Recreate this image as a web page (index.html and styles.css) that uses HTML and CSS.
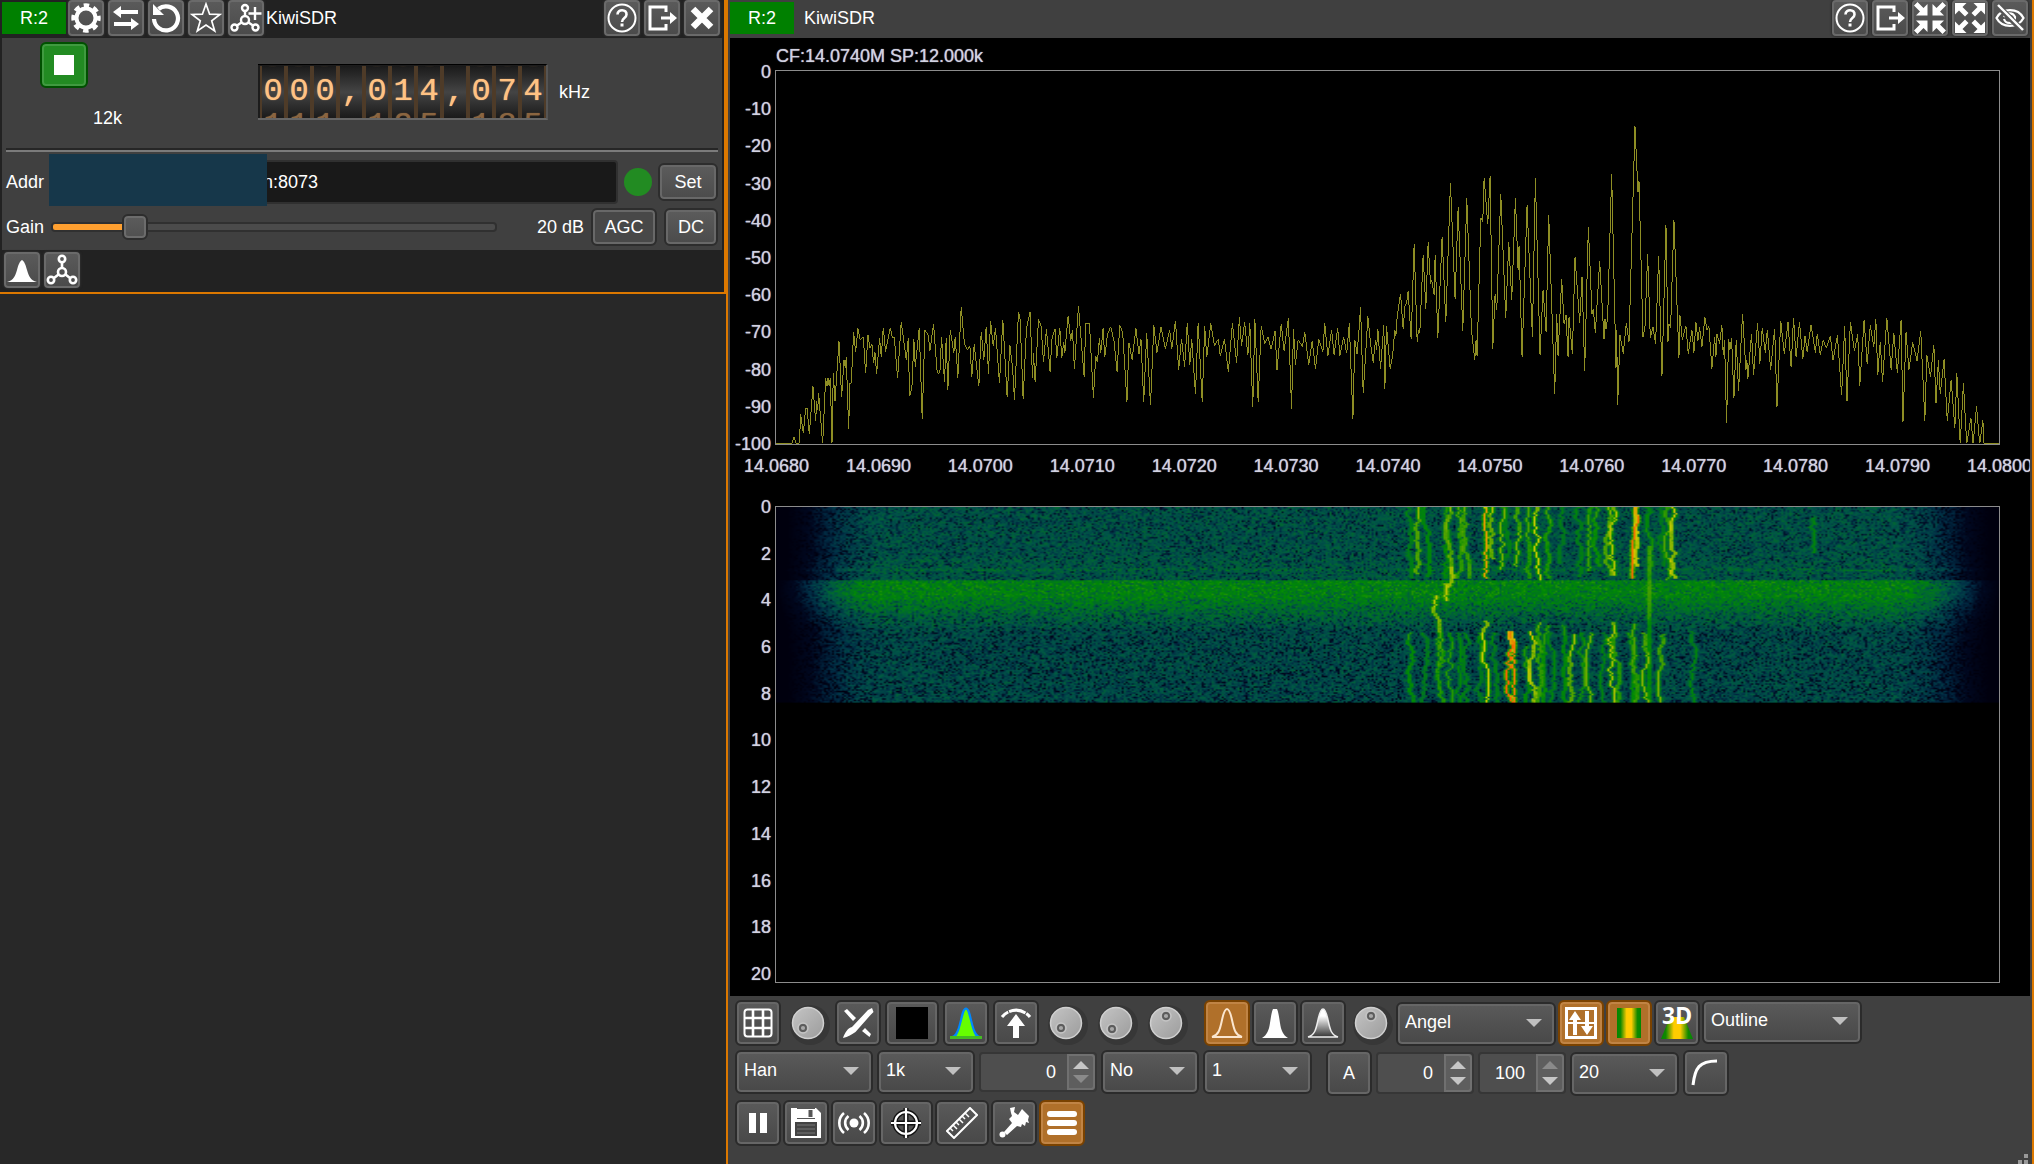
FILE: index.html
```html
<!DOCTYPE html>
<html lang="en">
<head>
<meta charset="utf-8">
<title>KiwiSDR</title>
<link rel="stylesheet" href="styles.css">
</head>
<body>
<svg class="defs" aria-hidden="true">
  <defs>
    <linearGradient id="fade" x1="0" y1="0" x2="0" y2="1"><stop offset="0" stop-color="#fff"/><stop offset=".25" stop-color="#fff"/><stop offset="1" stop-color="#333"/></linearGradient>
    <linearGradient id="band"><stop offset="0" stop-color="#080"/><stop offset=".15" stop-color="#180"/><stop offset=".4" stop-color="#fc0"/><stop offset=".6" stop-color="#fc0"/><stop offset=".85" stop-color="#180"/><stop offset="1" stop-color="#080"/></linearGradient>
    <linearGradient id="knob" x1="0" y1="0" x2="1" y2="1"><stop offset="0" stop-color="#c4c4c4"/><stop offset="1" stop-color="#9c9c9c"/></linearGradient>
    <symbol id="i-help" viewBox="0 0 32 32"><circle cx="16" cy="16" r="13.5" fill="none" stroke="#fff" stroke-width="2"/><path d="M11.5 12.5c0-6 9.500-5.500 9 0c0 3.500-4.500 3.500-4.500 7.500" fill="none" stroke="#fff" stroke-width="2.600"/><rect x="14.500" y="21.500" width="3" height="3" fill="#fff"/></symbol>
    <symbol id="i-exit" viewBox="0 0 32 32"><path d="M20 10V5H4v22h16v-5" fill="none" stroke="#fff" stroke-width="3"/><path d="M15 14.500h9V10l7 6-7 6v-4.500h-9z" fill="#fff"/></symbol>
    <symbol id="i-bell" viewBox="0 0 32 32"><path d="M1 30c7-2 8-8 10-17c1.500-7 3-11 5-11s3.500 4 5 11c2 9 3 15 10 17z"/></symbol>
    <symbol id="i-nodes" viewBox="0 0 32 32"><g fill="none" stroke="#fff" stroke-width="2.600"><circle cx="16" cy="5" r="3.200"/><circle cx="16" cy="18" r="4"/><circle cx="5" cy="26" r="3.200"/><circle cx="27" cy="26" r="3.200"/><path d="M16 8v6M12.500 20.500L8 24M19.500 20.500L24 24"/></g></symbol>
    <symbol id="i-dial" viewBox="0 0 46 46"><circle cx="25" cy="25" r="20" fill="#373737"/><circle cx="23" cy="23" r="15.500" fill="url(#knob)" stroke="#cfcfcf" stroke-width="1.500"/></symbol>
    <symbol id="i-dot" viewBox="0 0 12 12"><circle cx="6" cy="6" r="5" fill="#909090" stroke="#c4c4c4" stroke-width="1.500"/><circle cx="6" cy="6" r="3" fill="#a8a8a8" stroke="#5c5c5c" stroke-width="1.800"/></symbol>
  </defs>
</svg>

<main class="workspace">
  <section class="side">
    <div class="device">
      <header class="bar">
        <span class="badge">R:2</span>
        <button class="tool" aria-label="Settings"><svg viewBox="0 0 32 32"><circle cx="16" cy="16" r="9.500" fill="none" stroke="#fff" stroke-width="4"/><circle cx="16" cy="16" r="12.700" fill="none" stroke="#fff" stroke-width="4" stroke-dasharray="5.500 4.475" stroke-dashoffset="2.700"/></svg></button>
        <button class="tool" aria-label="Swap"><svg viewBox="0 0 32 32" fill="#fff"><path d="M3 10l8-6v4h17v4H11v4zM29 22l-8 6v-4H4v-4h17v-4z"/></svg></button>
        <button class="tool" aria-label="Reload"><svg viewBox="0 0 32 32"><path d="M8.500 7A12 12 0 1 1 4 17" fill="none" stroke="#fff" stroke-width="4.200"/><path d="M3 2v11h11z" fill="#fff"/></svg></button>
        <button class="tool" aria-label="Favourite"><svg viewBox="0 0 32 32"><path d="M16 2l3.600 10.200L30 12.500l-8.300 6.300L24.700 29 16 23 7.300 29l3-10.200L2 12.500l10.400-.3z" fill="none" stroke="#fff" stroke-width="1.700"/></svg></button>
        <button class="tool" aria-label="Add channel"><svg viewBox="0 0 32 32"><g fill="none" stroke="#fff" stroke-width="2.400"><circle cx="15" cy="6" r="3"/><circle cx="15" cy="18" r="4"/><circle cx="4.500" cy="25.500" r="3"/><circle cx="25.500" cy="25.500" r="3"/><path d="M15 9v5M11.500 20.500L7 23.500M18.500 20.500L23 23.500M25 5v13M18.500 11.500h13"/></g></svg></button>
        <h1 class="name">KiwiSDR</h1>
        <span class="grow"></span>
        <button class="tool" aria-label="Help"><svg><use href="#i-help"/></svg></button>
        <button class="tool" aria-label="Move"><svg><use href="#i-exit"/></svg></button>
        <button class="tool" aria-label="Close"><svg viewBox="0 0 32 32"><path d="M7 7l18 18M25 7L7 25" stroke="#fff" stroke-width="6.500"/></svg></button>
      </header>

      <div class="panel">
        <div class="tuning">
          <div class="run">
            <button class="start" aria-label="Stop"><span class="stop"></span></button>
            <span class="rate">12k</span>
          </div>
          <div class="freq" id="freq" aria-label="Frequency"></div>
          <span class="unit">kHz</span>
        </div>
        <hr class="rule">
        <div class="line addr">
          <label for="addr">Addr</label>
          <span class="field"><input id="addr" type="text" value="n:8073"><span class="mask"></span></span>
          <span class="led"></span>
          <button class="push set">Set</button>
        </div>
        <div class="line gain">
          <label for="gain">Gain</label>
          <input id="gain" class="slider" type="range" min="0" max="120" value="20">
          <output class="db" for="gain">20 dB</output>
          <button class="push agc">AGC</button>
          <button class="push dc">DC</button>
        </div>
      </div>

      <footer class="bar foot">
        <button class="tool" aria-label="Spectrum"><svg viewBox="0 0 32 32"><path d="M1 28c7-2 8-6 10-12c1.500-6 3-9 5-10c2 1 3.500 4 5 10c2 6 3 10 10 12z" fill="#fff"/></svg></button>
        <button class="tool" aria-label="Channels"><svg><use href="#i-nodes"/></svg></button>
      </footer>
    </div>
  </section>

  <section class="view">
    <header class="bar light">
      <span class="badge">R:2</span>
      <h2 class="name">KiwiSDR</h2>
      <span class="grow"></span>
      <button class="tool" aria-label="Help"><svg><use href="#i-help"/></svg></button>
      <button class="tool" aria-label="Move"><svg><use href="#i-exit"/></svg></button>
      <button class="tool" aria-label="Shrink"><svg viewBox="0 0 32 32" fill="#fff"><path id="in" d="M13.500 13.500H2l4-4L0 3.500 3.500 0l6 6 4-4z"/><use href="#in" transform="matrix(-1 0 0 1 32 0)"/><use href="#in" transform="matrix(1 0 0 -1 0 32)"/><use href="#in" transform="matrix(-1 0 0 -1 32 32)"/></svg></button>
      <button class="tool" aria-label="Enlarge"><svg viewBox="0 0 32 32" fill="#fff"><path id="out" d="M1 1h11.500l-4 4 6 6-3.500 3.500-6-6-4 4z"/><use href="#out" transform="matrix(-1 0 0 1 32 0)"/><use href="#out" transform="matrix(1 0 0 -1 0 32)"/><use href="#out" transform="matrix(-1 0 0 -1 32 32)"/></svg></button>
      <button class="tool" aria-label="Hide"><svg viewBox="0 0 32 32" fill="none" stroke="#fff" stroke-width="2.200"><path d="M2.500 16C8 5.500 24 5.500 29.500 16C24 26.500 8 26.500 2.500 16z"/><path d="M10 15a6 6 0 0 1 11 0c1 7-9 8-11 2"/><path d="M4 4l25 25" stroke="#555" stroke-width="6"/><path d="M4 3l25 25" stroke-width="2.400"/></svg></button>
    </header>

    <div class="plots">
      <p class="caption">CF:14.0740M SP:12.000k</p>
      <div class="yaxis power"><span>0</span><span>-10</span><span>-20</span><span>-30</span><span>-40</span><span>-50</span><span>-60</span><span>-70</span><span>-80</span><span>-90</span><span>-100</span></div>
      <div class="frame"><canvas id="spectrum"></canvas></div>
      <div class="xaxis"><span>14.0680</span><span>14.0690</span><span>14.0700</span><span>14.0710</span><span>14.0720</span><span>14.0730</span><span>14.0740</span><span>14.0750</span><span>14.0760</span><span>14.0770</span><span>14.0780</span><span>14.0790</span><span>14.0800</span></div>
      <div class="yaxis time"><span>0</span><span>2</span><span>4</span><span>6</span><span>8</span><span>10</span><span>12</span><span>14</span><span>16</span><span>18</span><span>20</span></div>
      <div class="frame"><canvas id="waterfall"></canvas></div>
    </div>

    <div class="controls">
      <div class="row traces">
        <div class="group wide">
          <button class="btn" aria-label="Grid"><svg viewBox="0 0 32 32" fill="none" stroke="#fff" stroke-width="2"><rect x="2.500" y="2.500" width="27" height="27" rx="3"/><path d="M11 3v26M21 3v26M3 11h26M3 21h26" stroke-width="2.600"/></svg></button>
          <label class="dial"><input type="range" aria-label="Grid intensity"><svg class="knob"><use href="#i-dial"/><use href="#i-dot" x="12" y="22" width="12" height="12"/></svg></label>
          <button class="btn" aria-label="Clear"><svg viewBox="0 0 32 32" fill="#fff"><path d="M1 31c2-6 5-10 9-11L26 3l4-2 1.500 4-3 3-15 17C10 27 6 30 1 31z"/><path d="M2 4l3-2 9 9-3 3zM20 24l3-3 6 6-1.500 3z"/></svg></button>
          <button class="btn color" aria-label="Trace colour"><span class="swatch"></span></button>
          <button class="btn" aria-label="Max hold"><svg viewBox="0 0 32 32"><path d="M2 29C8 28 10 10 12 5c2-6 6-6 8 0c2 5 4 23 10 24z" fill="#08f"/><path d="M5 31C11 25 13 4 16 2.500C19 4 21 25 27 31z" fill="#6f0"/><path d="M0 29h32v3H0z" fill="#4b2"/></svg></button>
          <button class="btn" aria-label="Reference level"><svg viewBox="0 0 32 32"><path d="M2 10C9 1 23 1 30 10" fill="none" stroke="#fff" stroke-width="3" stroke-dasharray="8 1 17 1"/><path d="M16 7l9 12h-6v12h-6V19H7z" fill="#fff"/></svg></button>
          <label class="dial"><input type="range" aria-label="Decay"><svg class="knob"><use href="#i-dial"/><use href="#i-dot" x="12" y="22" width="12" height="12"/></svg></label>
          <label class="dial"><input type="range" aria-label="Decay divisor"><svg class="knob"><use href="#i-dial"/><use href="#i-dot" x="13" y="23" width="12" height="12"/></svg></label>
          <label class="dial"><input type="range" aria-label="Stroke"><svg class="knob"><use href="#i-dial"/><use href="#i-dot" x="17" y="10" width="12" height="12"/></svg></label>
        </div>
        <div class="group">
          <button class="btn on" aria-pressed="true" aria-label="Line trace"><svg viewBox="0 0 32 32"><use href="#i-bell" fill="none" stroke="#fbe6cf" stroke-width="2"/></svg></button>
          <button class="btn" aria-label="Filled trace"><svg viewBox="0 0 32 32"><path d="M3 31c5-3 7-8 8-15c1-6 1.500-11 3-14h4c1.500 3 2 8 3 14c1 7 3 12 8 15z" fill="#fff"/></svg></button>
          <button class="btn" aria-label="Gradient trace"><svg viewBox="0 0 32 32"><use href="#i-bell" fill="url(#fade)" stroke="#eee" stroke-width="1.500"/></svg></button>
          <label class="dial"><input type="range" aria-label="Trace intensity"><svg class="knob"><use href="#i-dial"/><use href="#i-dot" x="17" y="10" width="12" height="12"/></svg></label>
          <span class="combo map low"><select aria-label="Colour map"><option>Angel</option></select></span>
          <button class="btn on" aria-pressed="true" aria-label="Invert waterfall"><svg viewBox="0 0 32 32"><rect x="1.500" y="1.500" width="29" height="29" fill="none" stroke="#fff" stroke-width="3"/><path d="M2 16h28" stroke="#fff" stroke-width="2"/><path d="M8 28V13H4l6-9 6 9h-4v15zM20 4v15h-4l6 9 6-9h-4V4z" fill="#fff"/></svg></button>
          <button class="btn on" aria-pressed="true" aria-label="Waterfall"><svg viewBox="0 0 32 32"><path d="M4 1h24v30H4z" fill="url(#band)"/></svg></button>
          <button class="btn" aria-label="3D spectrogram"><svg viewBox="0 0 32 32"><path d="M9 10h14l9 22H0z" fill="url(#band)"/><text x="16" y="17" class="three">3D</text></svg></button>
          <span class="combo map"><select aria-label="3D style"><option>Outline</option></select></span>
        </div>
      </div>

      <div class="row">
        <div class="group wide">
          <span class="combo window"><select aria-label="FFT window"><option>Han</option></select></span>
          <span class="combo narrow"><select aria-label="FFT size"><option>1k</option></select></span>
          <span class="spin overlap"><input type="text" value="0" aria-label="Overlap"><span class="steps"><button aria-label="Up" class="up"></button><button aria-label="Down" class="down" disabled></button></span></span>
          <span class="combo narrow"><select aria-label="Averaging"><option>No</option></select></span>
          <span class="combo mid"><select aria-label="Averages"><option>1</option></select></span>
        </div>
        <div class="group wide">
          <button class="btn">A</button>
          <span class="spin ref"><input type="text" value="0" aria-label="Reference"><span class="steps"><button aria-label="Up" class="up"></button><button aria-label="Down" class="down"></button></span></span>
          <span class="spin range"><input type="text" value="100" aria-label="Range"><span class="steps"><button aria-label="Up" class="up" disabled></button><button aria-label="Down" class="down"></button></span></span>
          <span class="combo mid low"><select aria-label="Frames per second"><option>20</option></select></span>
          <button class="btn" aria-label="Linear scale"><svg viewBox="0 0 32 32"><path d="M3 28C5 11 9 4 27 4" fill="none" stroke="#fff" stroke-width="3"/></svg></button>
        </div>
      </div>

      <div class="row">
        <div class="group">
          <button class="btn" aria-label="Pause"><svg viewBox="0 0 32 32" fill="#fff"><path d="M7 6h7v20H7zM18 6h7v20h-7z"/></svg></button>
          <button class="btn" aria-label="Save"><svg viewBox="0 0 32 32"><path d="M1 1h25l5 5v25H1z" fill="#fff"/><path d="M7 1h18v11H7z" fill="#555"/><path d="M7 2h18v9H7z" fill="#fff"/><path d="M18.500 3h4v7h-4z" fill="#555"/><path d="M5 15h22v14H5z" fill="#444"/><path d="M7 18h18M7 22h18M7 26h18" stroke="#777"/></svg></button>
          <button class="btn" aria-label="Broadcast"><svg viewBox="0 0 32 32" fill="none" stroke="#fff" stroke-width="2.600"><circle cx="16" cy="16" r="4.500" fill="#fff" stroke="none"/><path d="M10.500 9a9 9 0 0 0 0 14M21.500 9a9 9 0 0 1 0 14M6 6a13 13 0 0 0 0 20M26 6a13 13 0 0 1 0 20"/></svg></button>
          <button class="btn color" aria-label="Go to annotation"><svg viewBox="0 0 32 32" fill="none" stroke="#fff" stroke-width="2.200"><g stroke="#111" stroke-width="5"><circle cx="16" cy="16" r="11"/><path d="M16 1v30M1 16h30"/></g><circle cx="16" cy="16" r="11"/><path d="M16 1v30M1 16h30"/></svg></button>
          <button class="btn color" aria-label="Markers"><svg viewBox="0 0 32 32" fill="none" stroke="#fff" stroke-width="2"><path d="M1 24L24 1l7 7L8 31z"/><path d="M4 21l3 3M7 18l4 4M10 15l3 3M13 12l4 4M16 9l3 3M19 6l4 4" stroke-width="1.500"/></svg></button>
          <button class="btn" aria-label="Measurements"><svg viewBox="0 0 32 32" fill="#fff"><path d="M12 1l5-1-1 5 4 3 4-6 7 7-1 4 1 3-3-1-1 4-3-2-1 3-4-1-10 9-3-3 8-9-3-4 3-3-1-3z"/><circle cx="4.500" cy="27.500" r="3"/></svg></button>
          <button class="btn on" aria-pressed="true" aria-label="Controls"><svg viewBox="0 0 32 32" fill="#fff"><rect x="1" y="4" width="30" height="6" rx="3"/><rect x="1" y="13" width="30" height="6" rx="3"/><rect x="1" y="22" width="30" height="6" rx="3"/></svg></button>
        </div>
      </div>
      <span class="grip"></span>
    </div>
  </section>
</main>
<script src="plots.js"></script>
</body>
</html>
```
FILE: styles.css
```css
* { box-sizing: border-box; }
body {
  margin: 0;
  background: #282828;
  color: #fff;
  font: 18px/20px "Liberation Sans", Arial, sans-serif;
}
button, input, select { font: inherit; color: inherit; margin: 0; }
.defs { position: absolute; width: 0; height: 0; }
.workspace {
  display: grid;
  grid-template-columns: 726fr 1308fr;
  min-height: 100vh;
}
.grow { flex: 1; }

/* window bars */
.device {
  border-right: 2px solid #dc7800;
  border-bottom: 2px solid #dc7800;
  background: #222;
  padding: 0 2px;
}
.bar {
  display: flex;
  gap: 4px;
  height: 38px;
  padding-right: 2px;
}
.bar.light { background: #404040; }
.badge {
  width: 64px;
  height: 32px;
  margin: 2px -2px 0 0;
  background: #008000;
  line-height: 32px;
  text-align: center;
}
.name { margin: 0 0 0 -2px; font: inherit; line-height: 36px; }
.light .name { margin-left: 8px; }
.tool {
  width: 36px;
  height: 36px;
  padding: 0;
  border: 2px solid #6a6a6a;
  border-radius: 4px;
  background: linear-gradient(#5a5a5a, #4b4b4b);
  box-shadow: 0 0 2px 1px #2d2d2d;
}
.tool svg { display: block; width: 32px; height: 32px; }
.foot { height: 42px; padding: 2px; }

/* device panel */
.panel { background: #404040; height: 212px; padding: 4px 4px 0; }
.tuning { display: flex; height: 106px; }
.run { width: 252px; padding-left: 34px; }
.start {
  display: grid;
  place-items: center;
  width: 48px;
  height: 46px;
  padding: 0;
  border: 2px solid #005000;
  border-radius: 6px;
  background: #228b22;
  box-shadow: inset 0 0 0 2px #409a40;
}
.stop { width: 20px; height: 20px; background: #fff; }
.rate { display: block; margin: 20px 0 0 53px; }
.freq {
  display: flex;
  height: 56px;
  margin-top: 22px;
  padding: 1px 0 0 2px;
  border-top: 1px solid #000;
  border-right: 2px solid #555;
  border-bottom: 2px solid #666;
  background: #1c1c1c;
}
.digit {
  display: flex;
  flex-direction: column;
  justify-content: center;
  width: 26px;
  height: 52px;
  overflow: hidden;
  border: solid #4e3b28;
  border-width: 0 2px;
  background: linear-gradient(#1a1a1a, #444 50%, #1a1a1a);
  color: #ffc283;
  font: 32px/34px "Liberation Mono", monospace;
  text-align: center;
  text-shadow: 0 0 1px currentColor;
}
.digit span { flex: none; height: 34px; }
.ghost { color: #8a6540; }
.unit { margin: 40px 0 0 11px; }
.rule { height: 4px; margin: 0 0 6px; border: solid; border-width: 2px 0; border-color: #262626 transparent #7b7b7b; background: #7b7b7b; }
.line { display: flex; align-items: center; }
.addr { height: 48px; }
.line label { width: 45px; }
.field { position: relative; flex: 1; }
.field input {
  display: block;
  width: 100%;
  height: 44px;
  padding: 0 8px 0 210px;
  border: 2px solid #303030;
  border-radius: 4px;
  background: #191919;
}
.mask { position: absolute; left: -2px; top: -6px; width: 218px; height: 52px; background: #16374a; }
.led { width: 28px; height: 28px; margin: 0 6px; border-radius: 50%; background: #228b22; }
.push {
  height: 38px;
  padding: 0;
  border: 2px solid #2d2d2d;
  border-radius: 6px;
  background: linear-gradient(#5c5c5c, #4b4b4b);
  box-shadow: inset 0 0 0 2px #686868;
}
.set { width: 60px; }
.gain { height: 42px; }
.slider {
  appearance: none;
  flex: none;
  width: 446px;
  height: 10px;
  border: 2px solid #303030;
  border-radius: 4px;
  background: linear-gradient(90deg, #ffa030 72px, #4b4b4b 72px);
}
.slider::-webkit-slider-thumb {
  appearance: none;
  width: 26px;
  height: 26px;
  border: 2px solid #2d2d2d;
  border-radius: 6px;
  background: linear-gradient(#5c5c5c, #505050);
  box-shadow: inset 0 0 0 2px #6c6c6c;
}
.db { flex: 1; text-align: right; }
.agc { width: 66px; margin: 0 7px; background: #484848; }
.dc { width: 54px; }

/* plots */
.view {
  display: flex;
  flex-direction: column;
  min-width: 0;
  padding: 0 2px;
  border: solid #dc7800;
  border-width: 0 2px;
  background: #404040;
}
.plots {
  flex: 1;
  display: grid;
  grid-template-columns: 45px minmax(0, 1fr);
  grid-template-rows: 32px 375fr 61px 477fr;
  padding: 0 30px 13px 0;
  background: #000;
  overflow: hidden;
  color: #d2d2e2;
  text-shadow: 0 0 1px #c8c8d8;
  line-height: 18px;
}
.caption { grid-column: 2; margin: 9px 0 0 1px; }
.yaxis {
  display: flex;
  flex-direction: column;
  justify-content: space-between;
  padding-right: 4px;
  text-align: right;
}
.power { margin: -7px 0 -8px; }
.time { margin: -8px 0 0; }
.frame { position: relative; border: 1px solid #8c8c8c; }
.frame canvas { position: absolute; left: 0; top: 0; width: 100%; height: 100%; }
.xaxis {
  grid-column: 2;
  display: flex;
  justify-content: space-between;
  margin: 12px -32px 0 -31px;
}

/* controls */
.controls {
  position: relative;
  display: flex;
  flex-direction: column;
  gap: 4px;
  height: 168px;
  padding: 4px 4px 0 5px;
}
.row { display: flex; gap: 14px; }
.traces { gap: 15px; }
.group { display: flex; gap: 2px; }
.wide { gap: 4px; }
.btn {
  display: grid;
  place-items: center;
  width: 46px;
  height: 46px;
  padding: 0;
  border: 2px solid #2b2b2b;
  border-radius: 6px;
  background: linear-gradient(#5a5a5a, #484848);
  box-shadow: inset 0 0 0 2px #666;
}
.btn svg { width: 32px; height: 32px; }
.btn.color { width: 54px; }
.btn.on { border-color: #7a4200; background: #b0702a; box-shadow: inset 0 0 0 2px #c08445; }
.swatch { width: 32px; height: 32px; background: #000; }
.three { fill: #fff; font: bold 23px "Noto Sans", sans-serif; text-anchor: middle; }
.dial { position: relative; width: 46px; height: 46px; }
.dial input { position: absolute; inset: 0; width: 100%; height: 100%; opacity: 0; }
.knob { display: block; width: 46px; height: 46px; }
.combo { position: relative; height: 44px; }
.combo.low { margin-top: 2px; }
.combo::after {
  content: "";
  position: absolute;
  right: 14px;
  top: 17px;
  border: solid transparent;
  border-width: 8px 8px 0;
  border-top-color: #c0c0c0;
  pointer-events: none;
}
.combo select {
  appearance: none;
  width: 100%;
  height: 100%;
  padding: 0 10px 4px 7px;
  border: 2px solid #2b2b2b;
  border-radius: 6px;
  background: linear-gradient(#5a5a5a, #484848);
  box-shadow: inset 0 0 0 2px #666;
}
.map { width: 160px; }
.window { width: 138px; }
.narrow { width: 98px; }
.mid { width: 109px; }
.spin {
  display: flex;
  height: 42px;
  margin-top: 2px;
  border: 2px solid #363636;
  border-radius: 4px;
  background: #4e4e4e;
}
.spin input { flex: 1; min-width: 0; padding: 0 11px 0 0; border: 0; background: none; text-align: right; }
.overlap { width: 118px; height: 40px; }
.ref { width: 98px; }
.range { width: 88px; }
.steps {
  display: flex;
  flex-direction: column;
  justify-content: space-evenly;
  align-items: center;
  width: 28px;
  border-radius: 0 4px 4px 0;
  background: #5e5e5e;
  box-shadow: inset 0 0 0 2px #707070;
}
.steps button { padding: 0; border: solid transparent; background: none; width: 16px; height: 8px; }
.steps .up { border-width: 0 8px 8px; border-bottom-color: #c6c6c6; }
.steps .down { border-width: 8px 8px 0; border-top-color: #c6c6c6; }
.steps .up:disabled { border-bottom-color: #8a8a8a; }
.steps .down:disabled { border-top-color: #8a8a8a; }
.grip {
  position: absolute;
  right: 2px;
  bottom: 0;
  width: 10px;
  height: 10px;
  background:
    linear-gradient(#999, #999) 6px 0 / 4px 4px no-repeat,
    linear-gradient(#999, #999) 6px 6px / 4px 4px no-repeat,
    linear-gradient(#999, #999) 0 6px / 4px 4px no-repeat;
}
```
FILE: plots.js
```js
// Frequency wheels: each digit with its neighbours above and below.
const freq = document.getElementById('freq');
for (const c of '000,014,074') {
  const cell = document.createElement('div');
  cell.className = 'digit';
  const isDigit = c !== ',';
  const parts = [isDigit ? (+c + 9) % 10 : '', c, isDigit ? (+c + 1) % 10 : ''];
  parts.forEach((p, i) => {
    const s = document.createElement('span');
    s.textContent = p;
    if (i !== 1) s.className = 'ghost';
    cell.append(s);
  });
  freq.append(cell);
}

let seed = 7;
function rnd() {
  seed = (seed * 1664525 + 1013904223) % 4294967296;
  return seed / 4294967296;
}

// Trace vertices in thirds of a pixel on a 1224 x 374 plot.
const lower = `168,1333 213,1333 219,1312 226,1333 235,1333 239,1243 247,1300 254,1225 258,1225 265,1303 276,1160 284,1265 287,1205 290,1230 293,1180 305,1333 314,1135 318,1160 321,1135 325,1160 328,1133 333,1333 337,1120 342,1205 354,1024 362,1193 369,1080 373,1105 376,1072 383,1288 387,1150 391,1150 398,997 404,1055 411,985 418,1020 427,1010 434,1120 441,1005 447,1045 453,1033 458,1090 462,1055 467,1123 476,1015 481,1070 487,983 494,1055 508,983 515,1015 520,1010 530,1135 541,965 556,1080 562,1015 566,1190 573,1165 579,1018 583,1100 595,985 604,1258 612,990 622,1005 627,1052 638,973 649,1118 657,1118 662,1010 671,1145 676,1015 681,1170 688,990 699,1060 703,1010 711,1133 721,922 731,1033 740,1050 747,1037 753,1130 760,1033 766,1087 774,1160 781,995 789,1080 796,980 803,1123 809,962 817,1038 824,985 836,1150 846,960 859,1193 867,1035 875,1100 881,1200 893,935 898,960 907,1198 917,985 928,935 935,1135 938,1060 943,1147 953,957 961,980 968,1085 977,987 988,1117 993,1018 1003,987 1008,1075 1017,983 1023,1073 1029,1027 1032,1060 1042,948 1050,1023 1055,990 1061,1108 1073,918 1090,1130 1095,970 1106,968 1118,1195 1125,1067 1130,1087 1136,1013 1140,1060 1147,985 1152,1072 1160,1005 1170,980 1180,1025 1189,1115 1197,975`;
const middle = `0,620 8,878 13,800 22,648 30,730 38,787 45,718 48,750 52,685 60,805 70,675 73,868 78,678 89,805 96,770 103,688 106,708 110,650 120,580 128,685 134,610 138,610 143,572 152,716 161,430 170,725 174,690 178,698 188,463 196,625 203,425 210,550 214,540 221,583 224,463 232,712 245,408 256,665 270,247 284,597 293,320 307,692 319,292 333,690 343,778 347,718 350,768 361,352 367,363 371,232 382,370 389,226 397,745 404,580 409,630 421,280 436,653 445,425 454,598 465,292 473,508 476,435 485,770 500,313 516,710 525,232 539,765 548,568 557,695 565,343 583,883 589,640 593,767 604,535 611,670 617,645 623,770 626,650 636,762 644,470 658,667 665,530 673,812 684,379 695,640 699,625 705,697 718,482 731,716 734,655 737,685 742,650 754,220 767,803 769,690 772,916 779,705 789,760 798,667 806,724 824,76 833,275 836,240 848,710 854,680 862,460 870,712 878,680 886,730 895,466 905,827 917,373 923,725 926,670 931,682 941,358 956,773 959,645 966,718 977,676 984,760 995,690 1001,757 1007,665 1013,722 1018,680 1025,740 1034,650 1040,690 1046,678 1055,805 1063,710 1067,770 1070,700 1078,730 1085,675 1089,765 1093,720 1099,970 1105,715 1109,748 1114,712 1121,895 1128,718 1135,872 1147,640 1157,810 1160,780 1163,835 1174,700 1180,825 1192,667 1199,790`;

function vertices(text, dx, dy) {
  return text.split(' ').map(p => {
    const [x, y] = p.split(',').map(Number);
    return [(x + dx) / 3, (y + dy) / 3];
  });
}

// Receiver noise floor between two plot columns.
function floor(from, to) {
  const pts = [];
  let high = true;
  for (let x = from; x < to; x += 1.8 + rnd() * 2.6) {
    const fall = Math.max(0, x - 1135) / 70;
    const roll = Math.pow(fall, 1.4) * 26;
    const dip = rnd() < 0.26 ? rnd() * 15 : 0;
    const db = (high ? 66 + rnd() * 7 : 73 + rnd() * 8 + dip + fall * rnd() * 14) + roll;
    pts.push([x, Math.min(374, db * 3.74)]);
    high = !high;
  }
  return pts;
}

function drawSpectrum() {
  const canvas = document.getElementById('spectrum');
  const w = canvas.width = canvas.clientWidth;
  const h = canvas.height = canvas.clientHeight;
  const g = canvas.getContext('2d');
  const pts = [
    ...vertices(lower, -168, -211), ...floor(346, 583),
    ...vertices(middle, 1752, 90), ...floor(986, 1207), [1208, 374], [1224, 374]
  ];
  g.fillStyle = '#8e8e24';
  let i = 0;
  let prev = null;
  for (let x = 0; x < w; x++) {
    const u = x * 1224 / w;
    // span every turning point that falls between two columns
    let top = Infinity, bottom = 0;
    while (i < pts.length - 2 && pts[i + 1][0] <= u) {
      i++;
      top = Math.min(top, pts[i][1]);
      bottom = Math.max(bottom, pts[i][1]);
    }
    const [a, b] = [pts[i], pts[i + 1]];
    const t = Math.min(1, Math.max(0, (u - a[0]) / (b[0] - a[0])));
    const y = a[1] + (b[1] - a[1]) * t;
    if (prev === null) prev = y;
    top = Math.round(Math.min(373, top, y, prev) * h / 374);
    bottom = Math.round(Math.min(373, Math.max(bottom, y, prev)) * h / 374);
    g.fillRect(x, top, 1, Math.max(1, bottom - top));
    prev = y;
  }
}

// Signals: x, first and last row, strength. Plot pixels.
const signals = [
  [632,0,72,.13],[640,0,67,.29],[650,0,70,.17],[670,0,72,.18],[672,0,72,.29],[682,0,72,.24],[690,0,72,.26],
  [707,0,72,.42],[716,0,52,.32],[725,0,62,.27],[732,0,50,.14],[741,0,60,.27],[750,0,72,.23],[761,0,73,.34],[772,0,72,.22],[786,0,56,.12],
  [802,0,70,.14],[815,0,64,.22],[820,0,60,.20],[832,0,69,.29],[837,0,68,.33],[859,0,72,.48],[862,0,60,.40],[873,0,60,.17],
  [885,0,60,.12],[891,0,73,.24],[898,0,71,.36],[1035,10,46,.14],
  [675,60,80,.33],[667,76,94,.33],[660,88,125,.33],[662,120,160,.20],
  [634,126,197,.19],[648,126,197,.13],[664,126,197,.23],[673,126,197,.19],[681,126,197,.14],[690,126,197,.14],[702,126,197,.13],
  [709,114,197,.34],[718,126,197,.14],[733,125,197,.50],[735,125,197,.46],[750,140,197,.18],[756,125,197,.37],[764,116,197,.26],[770,118,197,.20],
  [775,126,197,.14],[786,118,197,.18],[796,127,197,.31],[805,126,197,.17],[813,126,197,.27],[827,126,197,.13],[835,115,197,.32],[840,126,197,.24],
  [854,126,197,.18],[858,117,197,.24],[869,126,197,.29],[885,127,197,.28],[917,124,197,.14]
];
const stops = [[0,0,0,14],[.2,0,8,32],[.34,0,46,70],[.46,0,86,72],[.62,0,138,4],[.72,90,165,0],[.82,205,205,0],[.92,240,130,0],[1,250,80,0]];
function colour(v) {
  v = Math.min(1, Math.max(0, v));
  let i = 0;
  while (i < stops.length - 2 && v > stops[i + 1][0]) i++;
  const a = stops[i], b = stops[i + 1], t = (v - a[0]) / (b[0] - a[0]);
  return [1, 2, 3].map(k => a[k] + (b[k] - a[k]) * t);
}

function drawWaterfall() {
  const canvas = document.getElementById('waterfall');
  const W = canvas.width = 612, H = canvas.height = 318;
  const rows = 131;
  const level = new Float32Array(W * rows);
  for (let r = 0; r < rows; r++) {
    const y = r * 1.5;
    let burst = 0;
    if (y >= 73 && y < 125) burst = y < 88 ? 1 : 1 - (y - 88) / 37;
    if (Math.abs(y - 62) < 2) burst = .25;
    if (y > 50 && y < 73) burst += .08;
    const base = (y < 73 ? .47 : .45) + .16 * burst;
    const grain = y < 73 ? .26 : .34;
    for (let c = 0; c < W; c++) {
      const x = c * 2;
      const edge = Math.min(x, 1224 - x);
      const roll = Math.min(1, Math.max(0, (edge - 10 + burst * 10) / 110));
      const shape = 1 - Math.pow(1 - roll, 2.4);
      const speck = Math.pow(rnd(), 4) * grain * (1 + (1 - shape) * 1.5) * (1 - burst * .6);
      const spread = (rnd() - .5) * .10;
      level[r * W + c] = base * shape + (spread - speck) * Math.min(1, shape * 1.3);
    }
  }
  const add = (x, r, amp) => {
    const peak = .47 + amp;
    for (let c = Math.floor(x / 2) - 5; c <= x / 2 + 5; c++) {
      const d = c * 2 - x;
      const k = r * W + c;
      const f = Math.exp(-d * d / 5);
      const glow = .51 * Math.exp(-d * d / 50) * Math.min(1, amp * 5);
      level[k] = Math.max(level[k], glow, level[k] * (1 - f) + peak * f);
    }
  };
  for (const [x0, y0, y1, amp] of signals) {
    let drift = 0;
    for (let r = Math.round(y0 / 1.5); r < Math.min(rows, y1 / 1.5); r++) {
      if (rnd() < .4) drift += rnd() < .5 ? -2 : 2;
      drift = Math.max(-3, Math.min(3, drift));
      add(x0 + drift, r, amp);
    }
  }
  // steady carrier
  for (let r = 26; r < rows; r++) add(873, r, r < 75 ? .24 : .19);

  const g = canvas.getContext('2d');
  const img = g.createImageData(W, rows);
  for (let k = 0; k < level.length; k++) {
    const [R, G, B] = colour(level[k]);
    img.data.set([R, G, B, 255], k * 4);
  }
  g.putImageData(img, 0, 0);
}

function draw() { seed = 7; drawSpectrum(); drawWaterfall(); }
draw();
addEventListener('resize', draw);
```
